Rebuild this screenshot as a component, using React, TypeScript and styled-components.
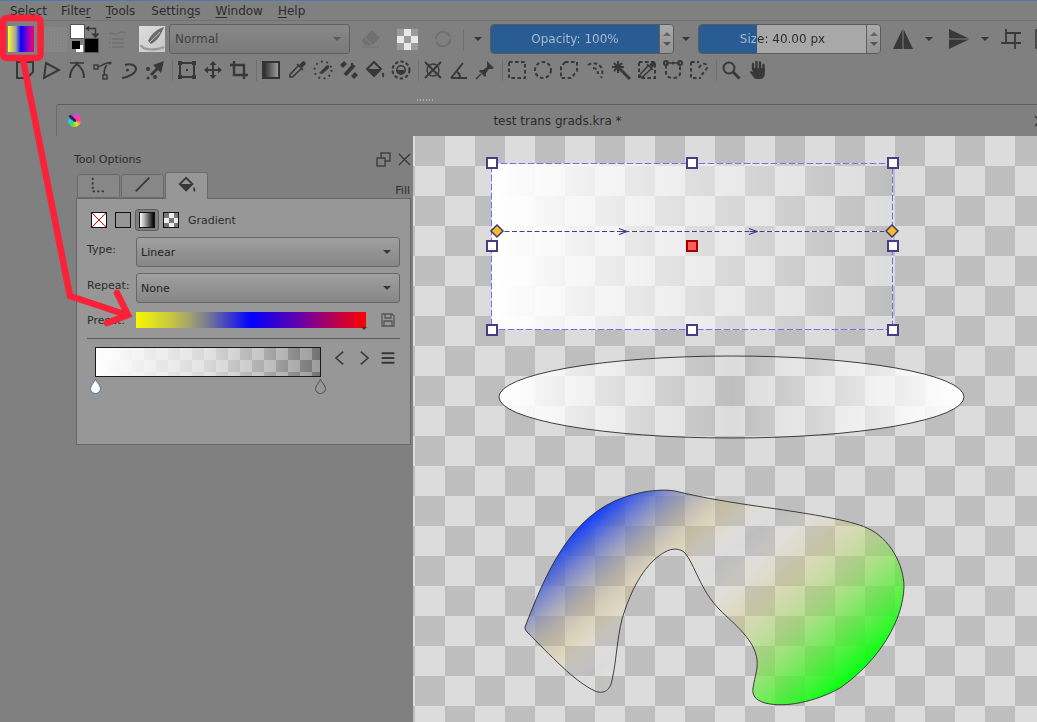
import React from 'react';
import styled, { createGlobalStyle } from 'styled-components';

const INK = '#383838';
const FONT = '"DejaVu Sans", "Liberation Sans", sans-serif';

const GlobalStyle = createGlobalStyle`
  html, body {
    margin: 0;
    padding: 0;
    background: #808080;
    overflow: hidden;
  }
`;

// generic drawing helpers
const Icon = styled.svg.attrs<{ viewBox?: string }>((p) => ({ viewBox: p.viewBox || '0 0 20 20' }))<{
  $size?: number;
  $ink?: string;
  $weight?: number;
}>`
  display: block;
  width: ${(p) => p.$size || 20}px;
  height: ${(p) => p.$size || 20}px;
  fill: none;
  stroke: ${(p) => p.$ink || INK};
  stroke-width: ${(p) => p.$weight || 2};
  flex-shrink: 0;
`;

const DIM = '#707070';
const D = { strokeDasharray: '3.6 2.4', strokeWidth: 2 };
const solid = { fill: INK, stroke: 'none' };

const Bucket = () => (
  <>
    <path d="M9 2l-7 7 7 7 7-7z" />
    <path d="M2 9h14l-7 7z" {...solid} />
    <path d="M17.5 13c1 2 1 3 .5 4" />
  </>
);

const Dropper = () => (
  <>
    <path d="M11 6L3 14.5V17h2.5L14 9M10 4l6 6" strokeWidth="1.6" />
    <path d="M12 5l3-3c1-1 2-1 3 0s1 2 0 3l-3 3z" {...solid} />
  </>
);

const toolGlyphs: (React.ReactNode | null)[] = [
  <path d="M2 2h16v10l-6 6H2z" />,
  <path d="M5 3l13 7-15 8z" />,
  <>
    <path d="M3 18c0-7 3-11 7-14 4 3 7 7 7 14" />
    <path d="M3 3h14" strokeWidth="1.5" />
    <circle cx="10" cy="3" r="1.5" {...solid} />
  </>,
  <>
    <rect x="1" y="5" width="4" height="4" strokeWidth="1.4" />
    <path d="M5 6.500c4 0 6-4 11-3.500M14 5c-3 3-3 7-2.500 10" strokeWidth="1.6" />
    <rect x="10" y="15" width="4" height="4" strokeWidth="1.4" />
    <circle cx="17" cy="3" r="1.600" {...solid} />
  </>,
  <>
    <path d="M3 18c7-1 14-5 14-9 0-4-6-6-11-4" />
    <circle cx="8.500" cy="10" r="1.500" {...solid} />
  </>,
  <>
    <path d="M19 1l-3 12-3-3-6 6-2-2 6-6-3-3z" {...solid} />
    <circle cx="3" cy="9" r="2" {...solid} />
    <circle cx="10" cy="17" r="2" {...solid} />
    <circle cx="3" cy="18" r="1.500" {...solid} />
  </>,
  null,
  <>
    <rect x="3" y="3" width="14" height="14" />
    <path d="M1 1h4v4H1zM15 1h4v4h-4zM1 15h4v4H1zM15 15h4v4h-4zM9 9h2v2H9z" {...solid} />
  </>,
  <>
    <path d="M10 2v16M2 10h16" />
    <path d="M6.500 5L10 1l3.500 4zM6.500 15L10 19l3.500-4zM5 6.500L1 10l4 3.500zM15 6.500l4 3.500-4 3.500z" {...solid} />
  </>,
  <path d="M5 1v14h14M1 5h14v14" strokeWidth="2.400" />,
  null,
  'gradient',
  <Dropper />,
  <>
    <circle cx="10" cy="10" r="8.500" strokeDasharray="1.800 3.600" strokeWidth="2" />
    <path d="M6 13l7-7c1-1 3-1 3 0s0 3-2 4l-5 4z" {...solid} />
  </>,
  <>
    <path d="M1 5l4-4 3 3-4 4zM12 16l4-4 3 3-4 4z" {...solid} />
    <path d="M6 15L15 5" strokeWidth="4" />
    <circle cx="13" cy="4" r="1.200" {...solid} />
  </>,
  <Bucket />,
  <>
    <circle cx="10" cy="10" r="8.500" strokeDasharray="3.400 2.200" />
    <circle cx="10" cy="10" r="4.200" strokeWidth="1.500" />
    <path d="M5.800 10h8.400a4.200 4.200 0 0 1-8.400 0z" {...solid} />
  </>,
  null,
  <>
    <path d="M2 2l16 16M18 2L2 18" />
    <circle cx="10" cy="10" r="6" strokeWidth="1.400" />
  </>,
  <path d="M2 18h16M2 18L14 3M11 18c0-3-1-5-3-6" />,
  <>
    <path d="M12 1l7 7-2 1-3 0-3 4 0 3-1 1-6-6 1-1 3 0 4-3 0-3z" {...solid} />
    <path d="M6 14l-5 5" strokeWidth="1.500" />
  </>,
  null,
  <rect x="2" y="2" width="16" height="16" {...D} />,
  <circle cx="10" cy="10" r="8" {...D} />,
  <path d="M6 2h12v9l-6 7H2V7z" {...D} />,
  <path d="M3 5c4-3 9-2 12 1s3 8 1 12M8 8c3 0 5 2 5 6" {...D} />,
  <>
    <path d="M9 9l10 10" strokeWidth="3" />
    <path d="M7 1v12M1 7h12M3 3l8 8M11 3l-8 8" strokeWidth="2" />
  </>,
  <>
    <rect x="2" y="2" width="16" height="16" {...D} />
    <Dropper />
  </>,
  <>
    <path d="M3 5v9c1 3 4 4 7 4s6-1 7-4V5" {...D} />
    <path d="M3 3h14" strokeWidth="1.500" />
    <circle cx="3" cy="3" r="2" />
    <circle cx="10" cy="3" r="1.500" {...solid} />
    <circle cx="17" cy="3" r="2" />
  </>,
  <>
    <path d="M2 2h8M2 2v16h10" {...D} />
    <path d="M10 8c2-5 8-6 8-1 0 3-4 5-5 8" {...D} />
    <path d="M18 18v.1" />
  </>,
  null,
  <>
    <circle cx="8" cy="8" r="5.500" />
    <path d="M12 12l6.500 6.500" strokeWidth="3" />
  </>,
  <>
    <path d="M6 9V4M9.500 9V2M13 9V2.500M16.500 10V5" strokeWidth="2.400" strokeLinecap="round" />
    <path d="M4.800 8h13v6c0 3-2 5-5 5h-3c-2 0-3-1-4-3l-3-4 1-1 2 1z" {...solid} />
  </>,
];

const Root = styled.div`
  position: relative;
  width: 1037px;
  height: 722px;
  overflow: hidden;
  display: flex;
  flex-direction: column;
  box-sizing: border-box;
  border-top: 1px solid #4f79b4;
  background: #808080;
  color: #2c2c2c;
  font-family: ${FONT};
  font-size: 12px;
`;

const MenuBar = styled.div`
  height: 19px;
  padding-left: 10px;
  display: flex;
  align-items: center;
  gap: 15px;
  border-bottom: 1px solid #747474;
`;

const MenuItem = styled.span`
  &:first-child {
    margin-right: -1px;
  }
  &:nth-child(3) {
    margin-right: 1px;
  }
  u {
    text-underline-offset: 2px;
  }
`;

const TopBar = styled.div`
  height: 36px;
  padding-left: 8px;
  display: flex;
  align-items: center;
`;

const ToolRow = styled.div`
  height: 26px;
  padding-left: 12px;
  display: flex;
  align-items: center;
`;

const ToolSlot = styled.div`
  width: 26px;
  display: flex;
  justify-content: center;
`;

const ToolSep = styled.div`
  width: 1px;
  height: 21px;
  margin: 0 1px 0 4px;
  background: #6f6f6f;
`;

const GradientTool = styled.div`
  width: 14px;
  height: 14px;
  border: 2px solid #333;
  margin: 1px;
  background: linear-gradient(90deg, #2e2e2e, #9b9b9b);
`;

const Slot = styled.div<{ $w: number; $ml?: number }>`
  width: ${(p) => p.$w}px;
  margin-left: ${(p) => p.$ml || 0}px;
  display: flex;
  justify-content: center;
  align-items: center;
  flex-shrink: 0;
`;

const GradientChip = styled.div`
  width: 26px;
  height: 26px;
  flex-shrink: 0;
  background: linear-gradient(90deg, #ffff20, #a0a0a0 30%, #0000ff 50%, #9000c8 75%, #f00078);
`;

const PatternChip = styled.div`
  width: 23px;
  height: 25px;
  margin-left: 10px;
  flex-shrink: 0;
  background: repeating-conic-gradient(#888 0 25%, #848484 0 50%) 0 0 / 3px 3px;
`;

const ColorPair = styled.div`
  margin-left: 4px;
  width: 28px;
  height: 28px;
  display: grid;
  grid-template-columns: 14px 14px;
  grid-template-rows: 14px 14px;
  flex-shrink: 0;
`;

const ColorBox = styled.div<{ $c: string }>`
  width: 13px;
  height: 13px;
  background: ${(p) => p.$c};
  box-shadow: 0 0 0 1px #555;
`;

const MiniReset = styled.div`
  width: 11px;
  height: 11px;
  margin: 2px 0 0 1px;
  background:
    linear-gradient(#000, #000) 0 0 / 8px 8px no-repeat,
    linear-gradient(#fff, #fff) 100% 100% / 7px 7px no-repeat;
`;

const BrushPreset = styled.div`
  width: 26px;
  height: 26px;
  margin-left: 12px;
  flex-shrink: 0;
  background: linear-gradient(135deg, #dedede, #c6c6c6);
`;

const Combo = styled.div<{ $w?: number }>`
  box-sizing: border-box;
  height: 30px;
  width: ${(p) => (p.$w ? `${p.$w}px` : '100%')};
  padding: 0 8px 0 5px;
  display: flex;
  align-items: center;
  justify-content: space-between;
  border: 1px solid #5f5f5f;
  border-radius: 3px;
  color: #404040;
  background: linear-gradient(#888, #7a7a7a);
`;

const ComboPanel = styled(Combo)`
  padding-left: 4px;
  border-color: #666;
  background: linear-gradient(#a0a0a0, #868686);
  font-size: 11px;
  color: #222;
`;

const Caret = styled.i<{ $soft?: boolean }>`
  display: block;
  width: 0;
  height: 0;
  border-left: 4px solid transparent;
  border-right: 4px solid transparent;
  border-top: 4px solid ${(p) => (p.$soft ? '#5a5a5a' : INK)};
  flex-shrink: 0;
`;

const Checker3 = styled.div`
  width: 21px;
  height: 21px;
  margin-left: 16px;
  flex-shrink: 0;
  background: repeating-conic-gradient(#e8e8e8 0 25%, #9c9c9c 0 50%) 0 0 / 14px 14px;
`;

const VLine = styled.div`
  width: 1px;
  height: 21px;
  margin-left: 10px;
  background: #6e6e6e;
  flex-shrink: 0;
`;

const Slider = styled.div<{ $w: number; $ml: number }>`
  box-sizing: border-box;
  width: ${(p) => p.$w}px;
  margin-left: ${(p) => p.$ml}px;
  height: 30px;
  display: flex;
  border: 1px solid #5a5a5a;
  border-radius: 4px;
  overflow: hidden;
  flex-shrink: 0;
`;

const SliderBody = styled.div<{ $fill: number }>`
  flex: 1;
  display: flex;
  align-items: center;
  justify-content: center;
  background: linear-gradient(90deg, #2a5c94 ${(p) => p.$fill}px, #a8a8a8 ${(p) => p.$fill}px);
`;

const SliderText = styled.span<{ $split: number }>`
  color: transparent;
  background: linear-gradient(90deg, #a9bdd3 ${(p) => p.$split}px, #2a2a2a ${(p) => p.$split}px);
  -webkit-background-clip: text;
  background-clip: text;
`;

const Spin = styled.div`
  width: 13px;
  display: flex;
  flex-direction: column;
  align-items: center;
  justify-content: center;
  gap: 6px;
  background: linear-gradient(#aaa, #929292);
  border-left: 1px solid #5f5f5f;
`;

const SpinDown = styled(Caret)`
  border-top-color: #555;
`;

const SpinUp = styled(Caret)`
  border-top: 0;
  border-bottom: 4px solid #666;
`;

const HandleBar = styled.div`
  height: 21px;
  padding: 16px 0 0 417px;
  box-sizing: border-box;
`;

const Grip = styled.div`
  width: 17px;
  height: 2px;
  background: repeating-linear-gradient(90deg, #b0b0b0 0 1px, transparent 1px 3px);
`;

const SubWindow = styled.div`
  flex: 1;
  width: 1002px;
  margin-left: 56px;
  display: flex;
  flex-direction: column;
  min-height: 0;
`;

const TitleBar = styled.div`
  position: relative;
  box-sizing: border-box;
  height: 32px;
  flex-shrink: 0;
  display: flex;
  align-items: center;
  justify-content: space-between;
  padding: 0 12px 0 11px;
  border-top: 1px solid #5e5e5e;
  border-left: 1px solid #6c6c6c;
  border-radius: 3px 0 0 0;
`;

const AppLogo = styled.div`
  position: relative;
  width: 13px;
  height: 13px;
  border-radius: 50%;
  background: conic-gradient(#ff30e0, #ff40a0 25%, #f0e020 40%, #30e060 60%, #20d0ff 75%, #4060ff 90%, #ff30e0);
  &::after {
    content: '';
    position: absolute;
    left: 0;
    top: 3px;
    width: 9px;
    height: 3px;
    background: #2a2a3a;
    transform: rotate(42deg);
    border-radius: 2px;
  }
`;

const WorkArea = styled.div`
  flex: 1;
  display: flex;
  min-height: 0;
`;

const Gutter = styled.div`
  width: 357px;
  flex-shrink: 0;
  box-sizing: border-box;
  padding: 14px 0 0 18px;
`;

const Canvas = styled.div`
  flex: 1;
  overflow: hidden;
  background: repeating-conic-gradient(#dcdcdc 0 25%, #bebebe 0 50%) 2px 0 / 60px 60px;
`;

const CanvasArt = styled.svg`
  display: block;
  width: 645px;
  height: 586px;
`;

const Panel = styled.div`
  width: 337px;
  font-size: 11px;
`;

const PanelHead = styled.div`
  box-sizing: border-box;
  height: 21px;
  padding-bottom: 2px;
  display: flex;
  align-items: center;
  gap: 6px;
  margin-right: -1px;
`;

const PanelTitle = styled.span`
  flex: 1;
`;

const Tabs = styled.div`
  height: 27px;
  margin-left: 3px;
  display: flex;
  align-items: flex-end;
  gap: 1px;
`;

const Tab = styled.div<{ $active?: boolean }>`
  box-sizing: border-box;
  width: 43px;
  height: ${(p) => (p.$active ? 27 : 24)}px;
  margin-bottom: ${(p) => (p.$active ? -1 : 0)}px;
  padding-bottom: 3px;
  position: relative;
  z-index: ${(p) => (p.$active ? 1 : 0)};
  display: flex;
  align-items: center;
  justify-content: center;
  border: 1px solid #6a6a6a;
  border-bottom: ${(p) => (p.$active ? 0 : '1px solid #6a6a6a')};
  border-radius: 3px 3px 0 0;
  background: ${(p) => (p.$active ? '#979797' : '#878787')};
`;

const TabLabel = styled.span`
  margin-left: auto;
  margin-right: 1px;
  margin-bottom: 1px;
`;

const PanelBody = styled.div`
  box-sizing: border-box;
  height: 247px;
  margin-left: 2px;
  padding: 10px 10px 0;
  border: 1px solid #676767;
  background: #979797;
`;

const FillRow = styled.div`
  display: flex;
  align-items: center;
  height: 22px;
`;

const FillBtn = styled.div<{ $on?: boolean }>`
  box-sizing: border-box;
  width: 24px;
  height: 22px;
  display: flex;
  align-items: center;
  justify-content: center;
  border-radius: 3px;
  border: 1px solid ${(p) => (p.$on ? '#5e5e5e' : 'transparent')};
  background: ${(p) => (p.$on ? '#7d7d7d' : 'transparent')};
`;

const Swatch = styled.div<{ $kind: 'none' | 'solid' | 'grad' | 'pattern' }>`
  box-sizing: border-box;
  width: 16px;
  height: 16px;
  border: 1px solid #111;
  background: ${(p) =>
    p.$kind === 'none'
      ? `linear-gradient(45deg, transparent 47%, #e00 47% 53%, transparent 53%),
         linear-gradient(-45deg, transparent 47%, #e00 47% 53%, transparent 53%), #fff`
      : p.$kind === 'grad'
        ? 'linear-gradient(90deg, #fff, #000)'
        : p.$kind === 'pattern'
          ? 'repeating-conic-gradient(#eee 0 25%, #777 0 50%) 0 0 / 10px 10px'
          : 'transparent'};
`;

const ModeLabel = styled.span`
  margin-left: 5px;
`;

const FormRow = styled.div<{ $top: number }>`
  display: grid;
  grid-template-columns: 49px 1fr;
  align-items: center;
  margin-top: ${(p) => p.$top}px;
`;

const FormLabel = styled.span`
  padding-bottom: 6px;
`;

const PresetRow = styled.div`
  display: grid;
  grid-template-columns: 49px 230px 1fr;
  align-items: center;
  margin-top: 9px;
  height: 16px;
`;

const PresetBar = styled.div`
  position: relative;
  height: 16px;
  background: linear-gradient(90deg, #f8f800, #c8c840 15%, #a0a070 24%, #7f7f90 30%, #0000ff 50%, #7000a0 73%, #ff0000);
`;

const PresetCaret = styled(Caret)`
  position: absolute;
  right: -1px;
  bottom: -2px;
  border-left-width: 3px;
  border-right-width: 3px;
  border-top-width: 3px;
`;

const SaveSlot = styled.div`
  display: flex;
  justify-content: center;
  padding-left: 10px;
`;

const Rule = styled.div`
  margin-top: 10px;
  height: 1px;
  background: #5a5a5a;
`;

const StopEditor = styled.div`
  margin: 8px 0 0 8px;
  display: flex;
  align-items: flex-start;
`;

const StopColumn = styled.div`
  width: 226px;
  flex-shrink: 0;
`;

const StopBar = styled.div`
  box-sizing: border-box;
  height: 30px;
  border: 1px solid #1c1c1c;
  background:
    linear-gradient(
      90deg,
      #fff,
      rgba(255, 255, 255, 0.72) 50%,
      rgba(255, 255, 255, 0.42) 75%,
      rgba(255, 255, 255, 0)
    ),
    repeating-conic-gradient(#9a9a9a 0 25%, #727272 0 50%) 0 0 / 24px 24px;
`;

const Drops = styled.div`
  display: flex;
  justify-content: space-between;
  margin: 1px -6px 0 -6px;
`;

const StopButtons = styled.div`
  display: flex;
  margin-left: 7px;
`;

const StopBtn = styled.div`
  width: 24px;
  height: 22px;
  display: flex;
  align-items: center;
  justify-content: center;
`;

const Annotation = styled.svg`
  position: absolute;
  left: 0;
  top: -1px;
  width: 140px;
  height: 340px;
  pointer-events: none;
  fill: none;
  stroke: #fb2138;
`;

const Handle = ({ x, y, red }: { x: number; y: number; red?: boolean }) => (
  <rect
    x={x - 5}
    y={y - 5}
    width="10"
    height="10"
    fill={red ? '#ff5c5c' : '#fff'}
    stroke={red ? '#a00000' : '#443f85'}
    strokeWidth="2"
  />
);

const Diamond = ({ x, y }: { x: number; y: number }) => (
  <path
    d={`M${x} ${y - 6}l6 6-6 6-6-6z`}
    fill="#fdb92c"
    stroke="#3d3a70"
    strokeWidth="1.500"
  />
);

const FlowArrow = ({ x, y }: { x: number; y: number }) => (
  <path
    d={`M${x} ${y - 3}l8 3-8 3M${x + 1} ${y}h6`}
    fill="none"
    stroke="#443f85"
    strokeWidth="1.200"
  />
);

const HANDLES = [
  [492, 163],
  [692, 163],
  [893, 163],
  [492, 246],
  [893, 246],
  [492, 330],
  [692, 330],
  [893, 330],
];

const Drop = ({ on }: { on?: boolean }) => (
  <svg width="13" height="16" viewBox="0 0 13 16">
    <path
      d="M6.500 1C6 4 1.500 7 1.500 10.500a5 5 0 0 0 10 0C11.500 7 7 4 6.500 1z"
      fill={on ? '#fff' : 'none'}
      stroke={on ? '#4c74a8' : '#505050'}
      strokeWidth="1"
    />
  </svg>
);

const CanvasShapes = () => (
  <CanvasArt viewBox="413 136 645 586">
    <defs>
      <linearGradient id="rectFill" x1="0" x2="1" y1="0" y2="0">
        <stop offset="0" stopColor="#fff" stopOpacity="1" />
        <stop offset="1" stopColor="#fff" stopOpacity="0" />
      </linearGradient>
      <linearGradient id="ellipseFill" x1="0" x2="1" y1="0" y2="0">
        <stop offset="0" stopColor="#fff" stopOpacity="1" />
        <stop offset="0.5" stopColor="#fff" stopOpacity="0" />
        <stop offset="1" stopColor="#fff" stopOpacity="1" />
      </linearGradient>
      <linearGradient id="blobFill" gradientUnits="userSpaceOnUse" x1="593" y1="513" x2="785" y2="734">
        <stop offset="0" stopColor="#0f3cff" stopOpacity="1" />
        <stop offset="0.29" stopColor="#e0c060" stopOpacity="0.24" />
        <stop offset="0.41" stopColor="#fff" stopOpacity="0" />
        <stop offset="0.58" stopColor="#e0d070" stopOpacity="0.26" />
        <stop offset="1" stopColor="#0cff14" stopOpacity="1" />
      </linearGradient>
    </defs>

    <rect x="491.500" y="163.500" width="401" height="166" fill="url(#rectFill)" />
    <rect x="491.500" y="163.500" width="401" height="166" fill="none" stroke="#fff" strokeWidth="1" />
    <rect x="491.500" y="163.500" width="401" height="166" fill="none" stroke="#7070f4" strokeWidth="1" strokeDasharray="7 2" />
    <line x1="497" y1="231.500" x2="892" y2="231.500" stroke="#fff" strokeWidth="1" />
    <line x1="497" y1="231.500" x2="892" y2="231.500" stroke="#443f85" strokeWidth="1" strokeDasharray="5 2.500" />
    <FlowArrow x={619} y={231.500} />
    <FlowArrow x={749} y={231.500} />
    <Diamond x={497} y={231} />
    <Diamond x={892} y={231} />
    {HANDLES.map(([x, y]) => (
      <Handle key={`${x}-${y}`} x={x} y={y} />
    ))}
    <Handle x={692} y={246} red />

    <ellipse cx="731.500" cy="397" rx="232.500" ry="41" fill="url(#ellipseFill)" stroke="#2a2a2a" strokeWidth="0.900" />

    <path
      d="M525 627C545 575 570 515 625 497C645 490 665 489 675 491C700 497 720 501 777 509C810 514 850 520 867 528C890 538 904 565 904 587C903 620 880 660 840 688C815 702 785 708 765 703C755 700 752 695 753 688C755 675 758 670 757 660C755 640 735 625 720 610C700 590 695 565 685 553C680 548 672 548 665 552C650 560 635 580 625 610C617 630 617 660 612 680C610 692 602 694 595 691C575 682 550 655 527 632C525 630 525 628 525 627Z"
      fill="url(#blobFill)"
      stroke="#2e2e2e"
      strokeWidth="0.900"
    />
  </CanvasArt>
);

const ToolOptions = () => (
  <Panel>
    <PanelHead>
      <PanelTitle>Tool Options</PanelTitle>
      <Icon $size={15} $weight={1.3} viewBox="0 0 15 15">
        <rect x="5" y="1" width="9" height="8" />
        <rect x="1" y="6" width="8" height="8" fill="#808080" />
      </Icon>
      <Icon $size={15} $weight={1.3} viewBox="0 0 15 15">
        <path d="M2 2l11 11M13 2L2 13" />
      </Icon>
    </PanelHead>
    <Tabs>
      <Tab>
        <Icon $size={18}>
          <path d="M3 2v15h15" strokeDasharray="2.500 2.500" />
        </Icon>
      </Tab>
      <Tab>
        <Icon $size={17}>
          <path d="M2 18L18 2" />
        </Icon>
      </Tab>
      <Tab $active>
        <Icon $size={18}>
          <Bucket />
        </Icon>
      </Tab>
      <TabLabel>Fill</TabLabel>
    </Tabs>
    <PanelBody>
      <FillRow>
        <FillBtn>
          <Swatch $kind="none" />
        </FillBtn>
        <FillBtn>
          <Swatch $kind="solid" />
        </FillBtn>
        <FillBtn $on>
          <Swatch $kind="grad" />
        </FillBtn>
        <FillBtn>
          <Swatch $kind="pattern" />
        </FillBtn>
        <ModeLabel>Gradient</ModeLabel>
      </FillRow>
      <FormRow $top={6}>
        <FormLabel>Type:</FormLabel>
        <ComboPanel>
          Linear
          <Caret />
        </ComboPanel>
      </FormRow>
      <FormRow $top={6}>
        <FormLabel>Repeat:</FormLabel>
        <ComboPanel>
          None
          <Caret />
        </ComboPanel>
      </FormRow>
      <PresetRow>
        <span>Preset:</span>
        <PresetBar>
          <PresetCaret />
        </PresetBar>
        <SaveSlot>
          <Icon $size={14} $ink="#555" $weight={1.3} viewBox="0 0 14 14">
            <path d="M1 1h10l2 2v10H1zM4 1v4h6V1M3 13V8h8v5" />
          </Icon>
        </SaveSlot>
      </PresetRow>
      <Rule />
      <StopEditor>
        <StopColumn>
          <StopBar />
          <Drops>
            <Drop on />
            <Drop />
          </Drops>
        </StopColumn>
        <StopButtons>
          <StopBtn>
            <Icon $size={16}>
              <path d="M14 2L5 10l9 8" />
            </Icon>
          </StopBtn>
          <StopBtn>
            <Icon $size={16}>
              <path d="M6 2l9 8-9 8" />
            </Icon>
          </StopBtn>
          <StopBtn>
            <Icon $size={16}>
              <path d="M2 4h16M2 10h16M2 16h16" strokeWidth="2.400" />
            </Icon>
          </StopBtn>
        </StopButtons>
      </StopEditor>
    </PanelBody>
  </Panel>
);

export default function App() {
  return (
    <Root>
      <GlobalStyle />
      <MenuBar>
        <MenuItem>Select</MenuItem>
        <MenuItem>
          Filte<u>r</u>
        </MenuItem>
        <MenuItem>
          <u>T</u>ools
        </MenuItem>
        <MenuItem>
          Settin<u>g</u>s
        </MenuItem>
        <MenuItem>
          <u>W</u>indow
        </MenuItem>
        <MenuItem>
          <u>H</u>elp
        </MenuItem>
      </MenuBar>

      <TopBar>
        <GradientChip />
        <PatternChip />
        <ColorPair>
          <ColorBox $c="#fff" />
          <Icon $size={14}>
            <path d="M5 5h10v8" />
            <path d="M0 5l6-4v8zM9 12h12l-6 7z" {...solid} />
          </Icon>
          <MiniReset />
          <ColorBox $c="#000" />
        </ColorPair>
        <Slot $w={20} $ml={8}>
          <Icon $ink={DIM}>
            <path d="M2 5c3-3 5 2 8 0s5-3 8-1M5 10h12M5 14h12M5 18h12M2 10h1M2 14h1M2 18h1" strokeWidth="1.500" />
          </Icon>
        </Slot>
        <BrushPreset>
          <Icon $size={26} viewBox="0 0 26 26">
            <path d="M25 1C18 3 12 8 9 15l3 3c6-3 10-9 13-17z" fill="#6c6c6c" stroke="none" />
            <path d="M21 6L11 16" stroke="#d0d0d0" strokeWidth="0.800" />
            <path d="M2 19c1 5 15 6 23 2" stroke="#9a9a9a" strokeWidth="2.500" />
          </Icon>
        </BrushPreset>
        <Slot $w={181} $ml={4}>
          <Combo $w={181}>
            Normal
            <Caret $soft />
          </Combo>
        </Slot>
        <Slot $w={20} $ml={11}>
          <Icon $ink={DIM}>
            <path d="M11 1l8 8-7 7-8-8z" fill={DIM} stroke="none" />
            <path d="M3 9l7 7H4l-3-4zM1 18h17" fill={DIM} strokeWidth="1" />
          </Icon>
        </Slot>
        <Checker3 />
        <Slot $w={20} $ml={15}>
          <Icon $ink={DIM}>
            <path d="M3 10a7 7 0 0 1 12-5l2 2M17 10a7 7 0 0 1-12 5l-2-2" />
          </Icon>
        </Slot>
        <VLine />
        <Slot $w={12} $ml={8}>
          <Caret />
        </Slot>
        <Slider $w={184} $ml={6}>
          <SliderBody $fill={170}>
            <SliderText $split={200}>Opacity: 100%</SliderText>
          </SliderBody>
          <Spin>
            <SpinUp />
            <SpinDown />
          </Spin>
        </Slider>
        <Slot $w={12} $ml={6}>
          <Caret />
        </Slot>
        <Slider $w={183} $ml={6}>
          <SliderBody $fill={58}>
            <SliderText $split={16}>Size: 40.00 px</SliderText>
          </SliderBody>
          <Spin>
            <SpinUp />
            <SpinDown />
          </Spin>
        </Slider>
        <Slot $w={20} $ml={12}>
          <Icon>
            <path d="M9.500 0L0 20h9.500zM10.500 0L20 20h-9.500z" {...solid} />
          </Icon>
        </Slot>
        <Slot $w={12} $ml={10}>
          <Caret />
        </Slot>
        <Slot $w={20} $ml={14}>
          <Icon>
            <path d="M0 0l20 9.500H0zM0 10.500h20L0 20z" {...solid} />
          </Icon>
        </Slot>
        <Slot $w={12} $ml={10}>
          <Caret />
        </Slot>
        <Slot $w={20} $ml={10}>
          <Icon $weight={1.8}>
            <path d="M5 0v14M0 14h20M5 4h15M14 4v16" />
          </Icon>
        </Slot>
        <Slot $w={20} $ml={12}>
          <Icon $weight={1.5}>
            <rect x="3" y="1" width="17" height="18" />
          </Icon>
        </Slot>
      </TopBar>

      <ToolRow>
        {toolGlyphs.map((glyph, i) =>
          glyph === null ? (
            <ToolSep key={i} />
          ) : (
            <ToolSlot key={i}>
              {glyph === 'gradient' ? <GradientTool /> : <Icon>{glyph}</Icon>}
            </ToolSlot>
          ),
        )}
      </ToolRow>

      <HandleBar>
        <Grip />
      </HandleBar>

      <SubWindow>
        <TitleBar>
          <AppLogo />
          <span>test trans grads.kra *</span>
          <Icon $size={12} $weight={1.5} viewBox="0 0 12 12">
            <path d="M1 1l10 10M11 1L1 11" />
          </Icon>
        </TitleBar>
        <WorkArea>
          <Gutter>
            <ToolOptions />
          </Gutter>
          <Canvas>
            <CanvasShapes />
          </Canvas>
        </WorkArea>
      </SubWindow>

      <Annotation viewBox="0 0 140 340">
        <rect x="3" y="18" width="37.500" height="40" rx="4" strokeWidth="6.500" />
        <path d="M23 60L70 296L124 314" strokeWidth="6.500" />
        <path d="M117 293L128 315L107 323" strokeWidth="6.500" strokeLinecap="round" />
      </Annotation>
    </Root>
  );
}
